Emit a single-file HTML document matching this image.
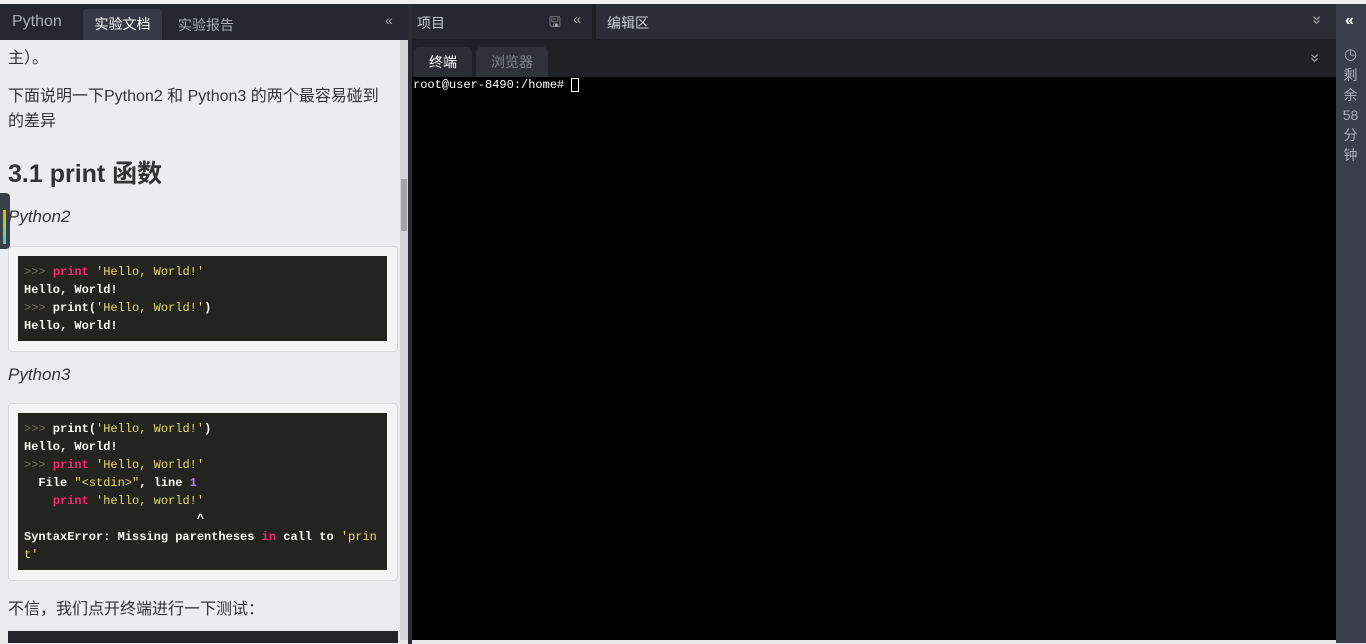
<!DOCTYPE html>
<html><head><meta charset="utf-8"><style>
*{margin:0;padding:0;box-sizing:border-box}
body{width:1366px;height:643px;overflow:hidden;background:#e8e8e8;font-family:"Liberation Sans","Noto Sans CJK SC",sans-serif;position:relative}
.abs{position:absolute}
.mono{font-family:"Liberation Mono","DejaVu Sans Mono",monospace}
pre{font-family:"Liberation Mono","DejaVu Sans Mono",monospace;font-size:12px;line-height:18px;color:#f8f8f2;font-weight:bold}
.p{color:#75715e;font-weight:normal}.k{color:#f92672}.s{color:#e6db74;font-weight:normal}.n{color:#ae81ff}
</style></head><body>
<div class="abs" style="left:0;top:0;width:1366px;height:4px;background:#f0f0f0"></div>
<div class="abs" style="left:0;top:4px;width:408px;height:36px;background:#242731"></div>
<div class="abs" style="left:12px;top:13px;font-size:16px;color:#a9adb5">Python</div>
<div class="abs" style="left:83px;top:9px;width:79px;height:31px;background:#363a46;border-radius:4px 4px 0 0;color:#fff;font-size:14px;text-align:center;line-height:30px">实验文档</div>
<div class="abs" style="left:178px;top:15px;font-size:14px;color:#a9adb5">实验报告</div>
<div class="abs" style="left:385px;top:12px;font-size:14px;color:#a9adb5">«</div>
<div class="abs" style="left:0;top:40px;width:400px;height:600px;background:#ebecee"></div>
<div class="abs" style="left:400px;top:40px;width:8px;height:600px;background:#d4d5d8"></div>
<div class="abs" style="left:401px;top:179px;width:6px;height:52px;background:#a3a3a3"></div>
<div class="abs" style="left:408px;top:4px;width:4px;height:640px;background:#2a2d36"></div>
<div class="abs" style="left:0;top:193px;width:10px;height:56px;background:#3b3f4a;border-radius:0 4px 4px 0"></div>
<div class="abs" style="left:3px;top:210px;width:3px;height:34px;background:linear-gradient(#e6b800,#8bd35a,#3dd6c2)"></div>
<div class="abs" style="left:8px;top:44px;font-size:16px;color:#333">主）。</div>
<div class="abs" style="left:8px;top:84px;font-size:16px;color:#333;line-height:25px;width:382px">下面说明一下Python2 和 Python3 的两个最容易碰到的差异</div>
<div class="abs" style="left:8px;top:154px;font-size:25px;font-weight:bold;color:#333">3.1 print 函数</div>
<div class="abs" style="left:8px;top:207px;font-size:17px;font-style:italic;color:#333">Python2</div>
<div class="abs" style="left:8px;top:246px;width:390px;height:106px;background:#f4f4f4;border:1px solid #d8d8d8;border-radius:4px"></div>
<div class="abs" style="left:18px;top:256px;width:369px;height:85px;background:#23241f;padding:7px 6px"><pre><span class="p">&gt;&gt;&gt;</span> <span class="k">print</span> <span class="s">'Hello, World!'</span>
Hello, World!
<span class="p">&gt;&gt;&gt;</span> print(<span class="s">'Hello, World!'</span>)
Hello, World!</pre></div>
<div class="abs" style="left:8px;top:365px;font-size:17px;font-style:italic;color:#333">Python3</div>
<div class="abs" style="left:8px;top:403px;width:390px;height:178px;background:#f4f4f4;border:1px solid #d8d8d8;border-radius:4px"></div>
<div class="abs" style="left:18px;top:413px;width:369px;height:157px;background:#23241f;padding:7px 6px"><pre><span class="p">&gt;&gt;&gt;</span> print(<span class="s">'Hello, World!'</span>)
Hello, World!
<span class="p">&gt;&gt;&gt;</span> <span class="k">print</span> <span class="s">'Hello, World!'</span>
  File <span class="s">"&lt;stdin&gt;"</span>, line <span class="n">1</span>
    <span class="k">print</span> <span class="s">'hello, world!'</span>
                        ^
SyntaxError: Missing parentheses <span class="k">in</span> call to <span class="s">'prin
t'</span></pre></div>
<div class="abs" style="left:8px;top:595px;font-size:16px;color:#333">不信，我们点开终端进行一下测试：</div>
<div class="abs" style="left:8px;top:631px;width:390px;height:12px;background:#23242a"></div>
<div class="abs" style="left:412px;top:4px;width:180px;height:35px;background:#252830"></div>
<div class="abs" style="left:417px;top:13px;font-size:14px;color:#c8ccd4">项目</div>
<div class="abs" style="left:549px;top:12px;font-size:14px;color:#aaa">🖫</div>
<div class="abs" style="left:573px;top:11px;font-size:15px;color:#aaa">«</div>
<div class="abs" style="left:592px;top:4px;width:4px;height:35px;background:#1c1e23"></div>
<div class="abs" style="left:596px;top:4px;width:740px;height:35px;background:#2b2e37"></div>
<div class="abs" style="left:607px;top:13px;font-size:14px;color:#c8ccd4">编辑区</div>
<div class="abs" style="left:1312px;top:11px;font-size:16px;color:#aaa;transform:rotate(90deg)">»</div>
<div class="abs" style="left:412px;top:39px;width:924px;height:38px;background:#1f2126"></div>
<div class="abs" style="left:414px;top:47px;width:58px;height:30px;background:#2a2d35;border-radius:5px 5px 0 0;color:#fff;font-size:14px;text-align:center;line-height:30px">终端</div>
<div class="abs" style="left:476px;top:47px;width:72px;height:30px;background:#2f323b;border-radius:5px 5px 0 0;color:#7d818a;font-size:14px;text-align:center;line-height:30px">浏览器</div>
<div class="abs" style="left:1310px;top:49px;font-size:16px;color:#aaa;transform:rotate(90deg)">»</div>
<div class="abs" style="left:412px;top:77px;width:924px;height:563px;background:#000"></div>
<div class="abs mono" style="left:413px;top:77px;font-size:12px;color:#fff;line-height:16px">root@user-8490:/home# <span style="display:inline-block;width:8px;height:14px;border:1px solid #fff;vertical-align:middle"></span></div>
<div class="abs" style="left:1336px;top:4px;width:30px;height:639px;background:#3a3e4a"></div>
<div class="abs" style="left:1345px;top:12px;font-size:16px;color:#fff;font-weight:bold">«</div>
<div class="abs" style="left:1341px;top:44px;width:19px;font-size:14px;color:#aab0bb;text-align:center;line-height:20px"><span style="font-size:15px">◷</span><br>剩<br>余<br>58<br>分<br>钟</div>
</body></html>
